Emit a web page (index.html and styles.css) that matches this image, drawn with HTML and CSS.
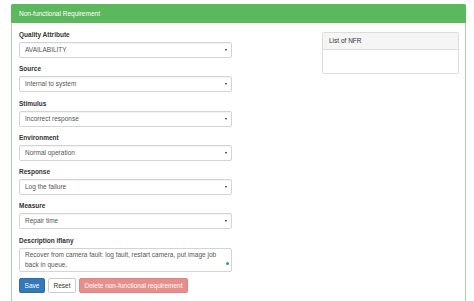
FILE: index.html
```html
<!DOCTYPE html>
<html lang="en">

<head>
    <meta charset="UTF-8">
    <meta name="viewport" content="width=device-width, initial-scale=1.0">
    <title>Non-functional Requirement</title>
    <link rel="stylesheet" href="styles.css">
</head>

<body>
    <div class="panel">
        <div class="panel-heading">Non-functional Requirement</div>
        <div class="panel-body">
            <form class="nfr-form">
                <div class="form-group">
                    <label>Quality Attribute</label>
                    <div class="select">AVAILABILITY<span class="caret"></span></div>
                </div>
                <div class="form-group">
                    <label>Source</label>
                    <div class="select">Internal to system<span class="caret"></span></div>
                </div>
                <div class="form-group">
                    <label>Stimulus</label>
                    <div class="select">Incorrect response<span class="caret"></span></div>
                </div>
                <div class="form-group">
                    <label>Environment</label>
                    <div class="select">Normal operation<span class="caret"></span></div>
                </div>
                <div class="form-group">
                    <label>Response</label>
                    <div class="select">Log the failure<span class="caret"></span></div>
                </div>
                <div class="form-group">
                    <label>Measure</label>
                    <div class="select">Repair time<span class="caret"></span></div>
                </div>
                <div class="form-group">
                    <label>Description ifIany</label>
                    <div class="textarea">Recover from camera fault: log fault, restart camera, put image job back in queue.<span class="dot"></span></div>
                </div>
                <div class="buttons">
                    <button type="button" class="btn btn-primary">Save</button>
                    <button type="button" class="btn btn-default">Reset</button>
                    <button type="button" class="btn btn-danger" disabled>Delete non-functional requirement</button>
                </div>
            </form>
            <div class="side">
                <div class="list-panel">
                    <div class="list-heading">List of NFR</div>
                    <div class="list-body"></div>
                </div>
            </div>
        </div>
    </div>
</body>

</html>
```

FILE: styles.css
```css
* {
    box-sizing: border-box;
}

body {
    margin: 0;
    background: #fff;
    font-family: "Liberation Sans", Arial, sans-serif;
    font-size: 6.5px;
    color: #333;
}

.panel {
    margin: 4px 0 0 11px;
    width: 455px;
    height: 310px;
    border: 1px solid #a8d8a8;
    border-bottom: none;
    border-radius: 2px 2px 0 0;
}

.panel-heading {
    height: 19px;
    margin: -1px -1px 0 -1px;
    padding: 0 8px;
    line-height: 19px;
    background: #5cb85c;
    color: #fff;
    border-radius: 2px 2px 0 0;
}

.panel-body {
    display: flex;
    padding: 7px 6px 0 7px;
}

.nfr-form {
    width: 213px;
}

.form-group {
    margin-bottom: 6.3px;
}

.form-group label {
    display: block;
    height: 10px;
    line-height: 10px;
    margin-bottom: 2px;
    font-weight: bold;
}

.select {
    position: relative;
    height: 16px;
    line-height: 14px;
    padding: 0 5px;
    border: 1px solid #d4d4d4;
    border-radius: 2px;
    color: #555;
    box-shadow: inset 0 1px 1px rgba(0, 0, 0, .05);
}

.caret {
    position: absolute;
    right: 4px;
    top: 6px;
    border-left: 1.5px solid transparent;
    border-right: 1.5px solid transparent;
    border-top: 2px solid #222;
}

.textarea {
    position: relative;
    height: 24px;
    padding: 1px 5px;
    line-height: 10px;
    border: 1px solid #d4d4d4;
    border-radius: 2px;
    color: #555;
}

.dot {
    position: absolute;
    right: 2px;
    top: 13px;
    width: 3px;
    height: 3px;
    border-radius: 50%;
    background: #1fa67a;
}

.buttons {
    display: flex;
    gap: 3px;
    margin-top: 1.7px;
}

.btn {
    height: 15px;
    padding: 0 7px;
    border: 1px solid transparent;
    border-radius: 2px;
    font-family: inherit;
    font-size: 6.5px;
    line-height: 13px;
}

.btn-primary {
    width: 26px;
    padding: 0;
    background: #337ab7;
    border-color: #2e6da4;
    color: #fff;
}

.btn-default {
    width: 28px;
    padding: 0;
    background: #fff;
    border-color: #ccc;
    color: #333;
}

.btn-danger {
    width: 109px;
    padding: 0;
    background: #d9534f;
    border-color: #d43f3a;
    color: #fff;
    opacity: .65;
}

.side {
    margin-left: 90px;
    padding-top: 2px;
}

.list-panel {
    width: 137px;
    border: 1px solid #ddd;
    border-radius: 2px;
}

.list-heading {
    height: 17px;
    line-height: 16px;
    padding: 0 6px;
    background: #f5f5f5;
    border-bottom: 1px solid #ddd;
}

.list-body {
    height: 23px;
}
```
